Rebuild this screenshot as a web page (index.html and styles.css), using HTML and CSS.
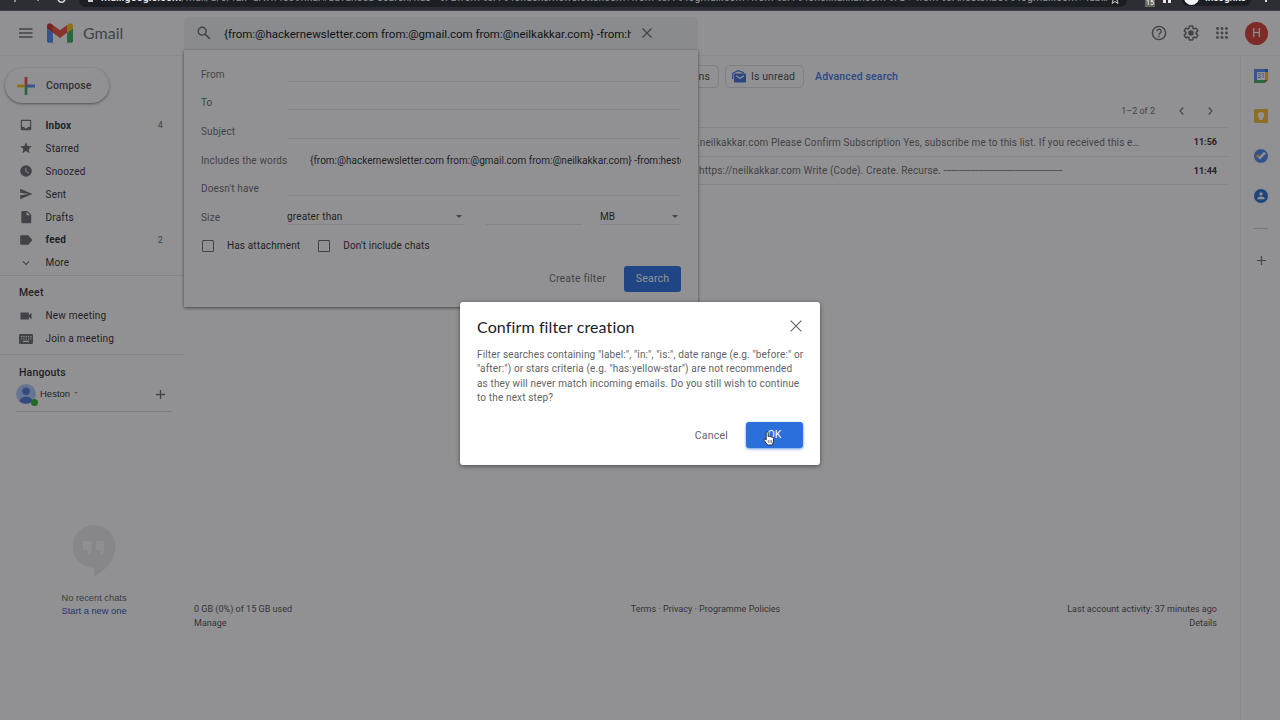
FILE: index.html
```html
<!DOCTYPE html>
<html lang="en">
<head>
    <meta charset="UTF-8">
    <title>Gmail</title>
    <link rel="stylesheet" href="styles.css">
</head>
<body>
    <div class="browser-bar">
        <div class="browser-nav">
            <svg width="70" height="11" viewBox="0 0 70 11"><path d="M15 0v2M38 0v1" stroke="#aaa" stroke-width="1.5"/><path d="M58 0q3.5 4.500 7 0" fill="none" stroke="#ddd" stroke-width="1.5"/></svg>
        </div>
        <div class="url-pill">
            <span class="lock"></span>
            <span class="url"><b>mail.google.com</b>/mail/u/0/?zx=arwfi4o39nkar#advanced-search/has=%7Bfrom%3A%40hackernewsletter.com+from%3A%40gmail.com+from%3A%40neilkakkar.com%7D+-from%3Ahestonbot%40gmail.com+-lab…</span>
            <svg class="url-star" width="10" height="11" viewBox="0 0 10 11"><path d="M5-5l1.200 3.500H10L7 0l1 3.500-3-2-3 2L3 0" fill="none" stroke="#c8c9cc"/></svg>
        </div>
        <div class="extension"><span class="extension-badge">15</span></div>
        <svg class="puzzle" width="10" height="11" viewBox="0 0 10 11"><path d="M1 0h3v3H1zM6 0h3v3H6z" fill="#e8eaed"/></svg>
        <div class="incognito"><span class="incognito-icon"></span><span class="incognito-label">Incognito</span></div>
        <span class="browser-more"></span>
    </div>

    <div class="gmail">
        <header class="header">
            <svg class="menu-icon" width="14" height="10" viewBox="0 0 14 10"><path d="M0 1h13.500M0 5h13.500M0 9h13.500" stroke="#5f6368" stroke-width="1.500"/></svg>
            <svg class="logo" width="26" height="20" viewBox="52 42 88 66">
                <path fill="#4285f4" d="M58 108h14V74L52 59v43c0 3.320 2.690 6 6 6"/>
                <path fill="#34a853" d="M120 108h14c3.320 0 6-2.690 6-6V59l-20 15"/>
                <path fill="#fbbc04" d="M120 48v26l20-15v-8c0-7.420-8.470-11.650-14.400-7.200"/>
                <path fill="#ea4335" d="M72 74V48l24 18 24-18v26L96 92"/>
                <path fill="#c5221f" d="M52 51v8l20 15V48l-5.600-4.200c-5.940-4.450-14.400-.22-14.400 7.200"/>
            </svg>
            <span class="brand">Gmail</span>
            <div class="search-bar">
                <svg width="14" height="14" viewBox="0 0 14 14"><circle cx="5.200" cy="5.200" r="3.900" fill="none" stroke="#5f6368" stroke-width="1.500"/><path d="M8 8l4.800 4.800" stroke="#5f6368" stroke-width="1.700"/></svg>
                <span class="search-text">{from:@hackernewsletter.com from:@gmail.com from:@neilkakkar.com} -from:hestonbot</span>
                <svg width="10" height="10" viewBox="0 0 10 10"><path d="M.5.5l9 9M9.500.5l-9 9" stroke="#5f6368" stroke-width="1.300"/></svg>
            </div>
            <div class="header-actions">
                <svg width="16" height="16" viewBox="0 0 16 16" fill="none" stroke="#5f6368" stroke-width="1.400"><circle cx="8" cy="8" r="6.600"/><path d="M5.900 6.300a2.100 2.100 0 1 1 3.200 1.800Q8 8.700 8 9.700"/><path d="M8 10.700v1.500"/></svg>
                <svg width="18" height="18" viewBox="0 0 24 24" fill="#5f6368"><path d="M13.850 22.250h-3.700c-.74 0-1.360-.54-1.450-1.270l-.27-1.890c-.27-.14-.53-.29-.79-.46l-1.800.72c-.7.260-1.470-.030-1.810-.65L2.200 15.530c-.35-.66-.2-1.440.36-1.880l1.530-1.190c-.01-.150-.020-.3-.020-.46s.010-.310.020-.46l-1.520-1.190c-.59-.45-.74-1.260-.37-1.880l1.850-3.190c.34-.62 1.110-.9 1.790-.63l1.810.73c.26-.17.520-.32.780-.46l.27-1.910c.090-.7.710-1.250 1.440-1.250h3.700c.74 0 1.360.54 1.450 1.270l.27 1.890c.27.140.53.290.79.460l1.800-.72c.71-.26 1.480.030 1.820.65l1.840 3.180c.36.660.2 1.440-.36 1.880l-1.520 1.190c.010.150.020.3.020.46s-.010.310-.020.460l1.520 1.190c.56.450.72 1.230.37 1.860l-1.860 3.220c-.34.620-1.110.9-1.800.63l-1.800-.72c-.26.170-.52.320-.78.460l-.27 1.910c-.1.680-.72 1.220-1.460 1.220zm-3.230-2h2.760l.37-2.550.53-.22c.44-.18.880-.44 1.340-.78l.45-.34 2.380.96 1.380-2.400-2.030-1.580.070-.56c.030-.26.060-.51.060-.78s-.030-.53-.060-.78l-.070-.56 2.030-1.580-1.390-2.400-2.390.96-.45-.35c-.42-.32-.87-.58-1.330-.77l-.52-.22-.37-2.550h-2.760l-.37 2.550-.53.210c-.44.190-.88.440-1.340.79l-.45.330-2.380-.95-1.390 2.390 2.030 1.580-.070.560a7 7 0 0 0-.060.790c0 .26.020.53.060.78l.070.560-2.030 1.580 1.380 2.400 2.390-.96.450.35c.43.330.86.580 1.330.77l.53.220.38 2.550z"/><circle cx="12" cy="12" r="3.700"/></svg>
                <svg width="12" height="12" viewBox="0 0 12 12" fill="#5f6368"><circle cx="1.500" cy="1.500" r="1.400"/><circle cx="6" cy="1.500" r="1.400"/><circle cx="10.500" cy="1.500" r="1.400"/><circle cx="1.500" cy="6" r="1.400"/><circle cx="6" cy="6" r="1.400"/><circle cx="10.500" cy="6" r="1.400"/><circle cx="1.500" cy="10.500" r="1.400"/><circle cx="6" cy="10.500" r="1.400"/><circle cx="10.500" cy="10.500" r="1.400"/></svg>
                <span class="avatar">H</span>
            </div>
        </header>

        <div class="body">
            <nav class="sidebar">
                <button class="compose">
                    <svg width="18" height="18" viewBox="0 0 18 18"><path fill="#ea4335" d="M7.600 0h2.800v9H7.600z"/><path fill="#fbbc04" d="M0 7.600h7.600v2.800H0z"/><path fill="#34a853" d="M7.600 9h2.800v9H7.600z"/><path fill="#4285f4" d="M10.400 7.600H18v2.800H9z"/></svg>
                    <span>Compose</span>
                </button>
                <ul class="nav-list">
                    <li class="unread"><svg viewBox="0 0 24 24"><path d="M19 3H5a2 2 0 0 0-2 2v14a2 2 0 0 0 2 2h14a2 2 0 0 0 2-2V5a2 2 0 0 0-2-2zm0 12h-4a3 3 0 0 1-6 0H5V5h14z"/></svg><span>Inbox</span><i>4</i></li>
                    <li><svg viewBox="0 0 24 24"><path d="M12 17.300l6.200 3.700-1.600-7L22 9.200l-7.200-.6L12 2 9.200 8.600 2 9.200 7.500 14l-1.700 7z"/></svg><span>Starred</span></li>
                    <li><svg viewBox="0 0 24 24"><path d="M12 2a10 10 0 1 0 0 20 10 10 0 0 0 0-20zm4.200 14.200L11 13V7h1.500v5.200l4.500 2.700z"/></svg><span>Snoozed</span></li>
                    <li><svg viewBox="0 0 24 24"><path d="M2 21l21-9L2 3v7l15 2-15 2z"/></svg><span>Sent</span></li>
                    <li><svg viewBox="0 0 24 24"><path d="M6 1.500a2 2 0 0 0-2 2v17c0 1.100.9 2 2 2h13a2 2 0 0 0 2-2V8l-6.500-6.500zM13 9V3l6 6z"/></svg><span>Drafts</span></li>
                    <li class="unread"><svg viewBox="0 0 24 24"><path d="M17 5c-.3-.6-1-1-1.600-1H4a2 2 0 0 0-2 2v12c0 1.100.9 2 2 2h11.400c.6 0 1.300-.4 1.600-.9l6-7.100z"/></svg><span>feed</span><i>2</i></li>
                    <li><svg viewBox="0 0 24 24"><path d="M7.400 8.500l4.600 4.600 4.600-4.600L18 9.900l-6 6-6-6z"/></svg><span>More</span></li>
                </ul>
                <div class="meet">
                    <h3>Meet</h3>
                    <ul class="nav-list">
                        <li><svg viewBox="0 0 24 24"><path d="M17 10.500V7a1 1 0 0 0-1-1H3.500a1 1 0 0 0-1 1v10a1 1 0 0 0 1 1H16a1 1 0 0 0 1-1v-3.500l4.500 4.200V6.300z"/></svg><span>New meeting</span></li>
                        <li><svg viewBox="0 0 24 24"><path fill-rule="evenodd" d="M2 3.500h20a2 2 0 0 1 2 2v13a2 2 0 0 1-2 2H2a2 2 0 0 1-2-2v-13a2 2 0 0 1 2-2zM3.500 7v2h2V7zm4 0v2h2V7zm4 0v2h2V7zm4 0v2h2V7zm4 0v2h2V7zm-16 4v2h2v-2zm4 0v2h2v-2zm4 0v2h2v-2zm4 0v2h2v-2zm4 0v2h2v-2zM7 15v2h10v-2z"/></svg><span>Join a meeting</span></li>
                    </ul>
                </div>
                <div class="hangouts">
                    <h3>Hangouts</h3>
                    <div class="user">
                        <span class="user-pic">
                            <svg width="20" height="20" viewBox="0 0 20 20"><circle cx="10" cy="10" r="10" fill="#a8c7fa"/><circle cx="10" cy="7.300" r="3.800" fill="#4272db"/><path d="M3.500 17.500c0-6.500 13-6.500 13 0Q10 22 3.500 17.500z" fill="#4272db"/></svg>
                            <span class="online"></span>
                        </span>
                        <span class="user-name">Heston</span>
                        <span class="caret small"></span>
                        <svg class="plus" width="9" height="9" viewBox="0 0 9 9"><path d="M4.500 0v9M0 4.500h9" stroke="#5f6368" stroke-width="1.300"/></svg>
                    </div>
                </div>
                <div class="no-chats">
                    <svg width="44" height="52" viewBox="0 0 44 52"><path d="M22 0a21.500 21.500 0 1 0 0 43v8.500C33 46 43.500 35 43.500 21.500A21.500 21.500 0 0 0 22 0z" fill="#ebebeb"/><path d="M11 16h8.500v9q0 4-4 4v-4H11zM24 16h8v9q0 4-4 4v-4h-4z" fill="#fafafa"/></svg>
                    <span>No recent chats</span>
                    <a>Start a new one</a>
                </div>
            </nav>

            <main class="content">
                <div class="chips">
                    <span class="chip chip-first">ns</span>
                    <span class="chip"><svg width="14" height="13" viewBox="0 0 14 13"><path d="M.7 9V3.300L6 .7l6 2.100" fill="none" stroke="#3367d6" stroke-width="1.200"/><path d="M3 3.500h10q1 0 1 1v7q0 1-1 1H3q-1 0-1-1v-7q0-1 1-1z" fill="#3367d6"/><path d="M4 5.700l4 2.500 4-2.500" fill="none" stroke="#fff" stroke-width="1.200"/></svg>Is unread</span>
                    <a class="advanced">Advanced search</a>
                </div>
                <div class="pager">
                    <span>1–2 of 2</span>
                    <svg width="5" height="8" viewBox="0 0 5 8"><path d="M4.300.5L1 4l3.300 3.500" fill="none" stroke="#5f6368" stroke-width="1.100"/></svg>
                    <svg width="5" height="8" viewBox="0 0 5 8"><path d="M.7.5L4 4 .7 7.500" fill="none" stroke="#5f6368" stroke-width="1.100"/></svg>
                </div>
                <div class="mail-row"><span class="snippet">.neilkakkar.com Please Confirm Subscription Yes, subscribe me to this list. If you received this e…</span><b>11:56</b></div>
                <div class="mail-row"><span class="snippet second">https://neilkakkar.com Write (Code). Create. Recurse. <span class="dashes">---------------------------------------------</span></span><b>11:44</b></div>
                <footer class="footer">
                    <div>0 GB (0%) of 15 GB used<br>Manage</div>
                    <div class="links">Terms · Privacy · Programme Policies</div>
                    <div class="activity">Last account activity: 37 minutes ago<br>Details</div>
                </footer>
            </main>

            <aside class="addons">
                <svg width="14" height="14" viewBox="0 0 14 14"><path fill="#4285f4" d="M1 0h10v3H3v8H0V1q0-1 1-1z"/><path fill="#1967d2" d="M11 0h2q1 0 1 1v2h-3z"/><path fill="#fbbc04" d="M11 3h3v8h-3z"/><path fill="#34a853" d="M3 11h8v3H1q-1 0-1-1v-2z"/><path fill="#ea4335" d="M11 11h3l-3 3z"/><path fill="#fff" d="M3 3h8v8H3z"/><text x="7" y="9.300" text-anchor="middle" class="cal-day">31</text></svg>
                <svg width="14" height="14" viewBox="0 0 14 14"><rect width="14" height="14" rx="1" fill="#f4b925"/><circle cx="7" cy="6.300" r="3.200" fill="#fff"/><path d="M5.400 8h3.200v3H5.400z" fill="#fff"/></svg>
                <svg width="14" height="14" viewBox="0 0 14 14"><circle cx="7" cy="7" r="7" fill="#4a7df0"/><path d="M5 9.700l6-6" fill="none" stroke="#fff" stroke-width="2.400"/><circle cx="3.700" cy="7" r="1.400" fill="#fbbc04"/></svg>
                <svg width="14" height="14" viewBox="0 0 14 14"><circle cx="7" cy="7" r="7" fill="#1967d2"/><circle cx="7" cy="4.900" r="1.700" fill="#fff"/><path d="M3.500 10.300V9.200q0-1.700 3.500-1.700t3.500 1.700v1.100z" fill="#fff"/></svg>
                <span class="addons-line"></span>
                <svg class="addons-plus" width="9" height="9" viewBox="0 0 9 9"><path d="M4.500 0v9M0 4.500h9" stroke="#5f6368" stroke-width="1.100"/></svg>
            </aside>
        </div>

        <!-- advanced search dropdown -->
        <form class="search-panel">
            <div class="field"><label>From</label><span class="line"></span></div>
            <div class="field"><label>To</label><span class="line"></span></div>
            <div class="field"><label>Subject</label><span class="line"></span></div>
            <div class="field"><label>Includes the words</label><span class="words">{from:@hackernewsletter.com from:@gmail.com from:@neilkakkar.com} -from:hestonbot</span></div>
            <div class="field"><label>Doesn't have</label><span class="line"></span></div>
            <div class="field">
                <label>Size</label>
                <span class="line select greater">greater than<span class="caret"></span></span>
                <span class="line amount"></span>
                <span class="line select unit">MB<span class="caret"></span></span>
            </div>
            <div class="field checks">
                <span class="box"></span><span class="check-label">Has attachment</span>
                <span class="box"></span><span class="check-label">Don't include chats</span>
            </div>
            <div class="panel-actions">
                <span class="create-filter">Create filter</span>
                <span class="search-btn">Search</span>
            </div>
        </form>

        <div class="scrim"></div>
        <div class="dialog">
            <div class="dialog-head">
                <h2>Confirm filter creation</h2>
                <svg width="12" height="12" viewBox="0 0 12 12"><path d="M.7.7l10.600 10.600M11.300.7L.7 11.300" stroke="#666" stroke-width="1.200"/></svg>
            </div>
            <p>Filter searches containing "label:", "in:", "is:", date range (e.g. "before:" or<br>"after:") or stars criteria (e.g. "has:yellow-star") are not recommended<br>as they will never match incoming emails. Do you still wish to continue<br>to the next step?</p>
            <div class="dialog-actions">
                <span class="cancel">Cancel</span>
                <span class="ok">OK</span>
            </div>
            <svg class="pointer" width="12" height="15" viewBox="0 0 12 15"><path d="M3.200 1.500q1-1.500 2 0v4q1-.8 1.700.2 1.100-.6 1.700.5 1.800-.5 1.900 1.300v3L9.300 14H4.600L1.200 9.500Q.4 7.700 2 7.800l1.200 1.100z" fill="#fff" stroke="#222" stroke-width=".9"/><path d="M5.300 9v3M7 9v3M8.600 9v3" stroke="#444" stroke-width=".6"/></svg>
        </div>
    </div>
</body>
</html>
```

FILE: styles.css
```css
* {
    box-sizing: border-box;
}
body {
    margin: 0;
    width: 1280px;
    height: 720px;
    overflow: hidden;
    font-family: Roboto, Arial, sans-serif;
    font-size: 10px;
    color: #202124;
}
svg {
    display: block;
    flex-shrink: 0;
}
h2, h3, p, ul {
    margin: 0;
    padding: 0;
}

/* browser chrome */
.browser-bar {
    height: 11px;
    display: flex;
    background: #2d2e33;
    border-bottom: 1px solid #414147;
    overflow: hidden;
}
.browser-nav {
    width: 79px;
}
.url-pill {
    width: 1048px;
    height: 7px;
    display: flex;
    padding-left: 9px;
    background: #1b1e22;
    border-radius: 0 0 9px 9px;
}
.lock {
    width: 5px;
    height: 2px;
    margin-right: 8px;
    background: #ccc;
}
.url {
    width: 999px;
    height: 14px;
    line-height: 14px;
    margin-top: -9px;
    white-space: nowrap;
    font-size: 10.500px;
    letter-spacing: 0.1px;
    color: #929599;
}
.url b {
    font-weight: 500;
    color: #e8eaed;
}
.url-star {
    margin-left: 10px;
}
.extension {
    width: 12px;
    height: 7px;
    margin-left: 17px;
}
.extension-badge {
    display: block;
    width: 10px;
    height: 7px;
    margin-left: 1px;
    background: #666;
    color: #fff;
    font-size: 7px;
    line-height: 7px;
    text-align: center;
}
.puzzle {
    margin-left: 6px;
}
.incognito {
    width: 69px;
    height: 6px;
    display: flex;
    margin-left: 10px;
    background: #1b1e22;
    border-radius: 0 0 8px 8px;
}
.incognito-icon {
    width: 15px;
    height: 15px;
    margin: -10px 6px 0 2px;
    border-radius: 50%;
    background: #f1f3f4;
    flex-shrink: 0;
}
.incognito-label {
    height: 14px;
    line-height: 14px;
    margin-top: -9px;
    font-size: 10px;
    font-weight: 500;
    letter-spacing: -0.1px;
    color: #e8eaed;
}
.browser-more {
    width: 2px;
    height: 2px;
    margin-left: 14px;
    background: #ddd;
}

/* page */
.gmail {
    position: relative;
    height: 709px;
    display: flex;
    flex-direction: column;
    background: #fff;
}
.header {
    height: 45px;
    display: flex;
    align-items: center;
    padding-left: 19px;
    border-bottom: 1px solid #f1f3f4;
}
.logo {
    margin-left: 14px;
}
.brand {
    width: 101px;
    margin-left: 10px;
    font-family: Lato, sans-serif;
    font-size: 16px;
    line-height: 18px;
    color: #5f6368;
}
.search-bar {
    width: 514px;
    height: 33px;
    display: flex;
    align-items: center;
    padding-left: 13px;
    background: #f1f3f4;
    border-radius: 5px 5px 0 0;
}
.search-text {
    width: 407px;
    margin: 1px 11px 0 13px;
    overflow: hidden;
    white-space: nowrap;
    font-size: 11.500px;
    color: #000;
}
.header-actions {
    margin-left: auto;
    padding-right: 12px;
    display: flex;
    align-items: center;
}
.header-actions svg:nth-child(1) { margin-right: 15px; }
.header-actions svg:nth-child(2) { margin-right: 16px; }
.header-actions svg:nth-child(3) { margin-right: 17px; }
.avatar {
    width: 23px;
    height: 23px;
    border-radius: 50%;
    background: #d93025;
    color: #fff;
    font-size: 12px;
    line-height: 23px;
    text-align: center;
}
.body {
    flex: 1;
    display: flex;
}

/* sidebar */
.sidebar {
    width: 184px;
    display: flex;
    flex-direction: column;
}
.compose {
    width: 104px;
    height: 35px;
    display: flex;
    align-items: center;
    gap: 11px;
    margin: 12px 0 11px 5px;
    padding: 0 0 0 12px;
    border: none;
    border-radius: 18px;
    background: #fff;
    box-shadow: 0 1px 2px rgba(60,64,67,0.5), 0 1px 3px 1px rgba(60,64,67,0.15);
    font-family: Roboto, sans-serif;
    font-size: 10.500px;
    font-weight: 500;
    letter-spacing: 0.1px;
    color: #3c4043;
}
.nav-list {
    list-style: none;
}
.nav-list li {
    height: 22.9px;
    display: flex;
    align-items: center;
    padding: 0 21px 0 19px;
    letter-spacing: 0.2px;
}
.nav-list svg {
    width: 14px;
    height: 14px;
    margin-right: 12.500px;
    fill: #5f6368;
}
.nav-list i {
    margin-left: auto;
    font-style: normal;
    font-weight: 400;
    font-size: 9px;
    color: #5f6368;
}
.unread {
    font-weight: 700;
}
.meet, .hangouts {
    border-top: 1px solid #e3e5e8;
}
.meet {
    height: 79px;
    margin-top: 1px;
}
.sidebar h3 {
    height: 28px;
    line-height: 34px;
    padding-left: 19px;
    font-size: 10.500px;
    font-weight: 500;
    letter-spacing: 0.15px;
}
.sidebar .hangouts h3 {
    height: 29px;
    line-height: 35px;
}
.user {
    height: 28px;
    width: 156px;
    display: flex;
    align-items: flex-start;
    margin-left: 16px;
    border-bottom: 1px solid #d5d7da;
}
.user-pic {
    position: relative;
}
.online {
    position: absolute;
    left: 15px;
    top: 15px;
    width: 7px;
    height: 7px;
    border-radius: 50%;
    background: #1fb31f;
}
.user-name {
    margin: 4px 4px 0 4px;
    font-family: "Liberation Sans", Arial, sans-serif;
    font-size: 9.500px;
}
.caret {
    margin-right: 2px;
    border: 3px solid transparent;
    border-top: 3px solid #5f6368;
    border-bottom: none;
}
.caret.small {
    margin-top: 8px;
    border-width: 2.500px 2.500px 0;
    border-top-color: #909090;
}
.plus {
    margin: 6px 7px 0 auto;
}
.no-chats {
    display: flex;
    flex-direction: column;
    align-items: center;
    margin: 113px 0 0 4px;
    font: 9.300px/13px "Liberation Sans", Arial, sans-serif;
    color: #555;
}
.no-chats svg {
    margin-bottom: 15px;
}
.no-chats a {
    color: #1a47c8;
}

/* mail list */
.content {
    width: 1057px;
    display: flex;
    flex-direction: column;
    border-right: 1px solid #f1f3f4;
}
.chips {
    display: flex;
    align-items: center;
    height: 22px;
    margin-top: 9px;
    padding-left: 455px;
    font-size: 10.500px;
}
.chip {
    height: 23px;
    display: flex;
    align-items: center;
    margin-right: 6px;
    padding: 0 8px 0 6px;
    border: 1px solid #dadce0;
    border-radius: 5px;
    letter-spacing: 0.1px;
    color: #3c4043;
}
.chip svg {
    margin-right: 5px;
}
.chip-first {
    width: 80px;
    justify-content: flex-end;
}
.advanced {
    margin-left: 5px;
    letter-spacing: 0.15px;
    font-weight: 500;
    color: #2f6de0;
}
.pager {
    height: 40px;
    display: flex;
    align-items: center;
    justify-content: flex-end;
    padding: 7px 27px 0 0;
    font-size: 9px;
    color: #5f6368;
}
.pager svg {
    margin-left: 24px;
}
.mail-row {
    height: 28.5px;
    width: 1044px;
    display: flex;
    align-items: center;
    justify-content: space-between;
    padding: 1px 11px 0 513px;
    border-top: 1px solid #e6e8ea;
    letter-spacing: 0.12px;
    color: #5f6368;
}
.mail-row + .footer {
    border-top: 1px solid #e6e8ea;
}
.mail-row b {
    font-size: 9px;
    letter-spacing: 0;
    color: #202124;
}
.snippet {
    white-space: nowrap;
}
.snippet.second {
    padding-left: 2px;
}
.dashes {
    letter-spacing: -0.120px;
}
.footer {
    width: 1044px;
    flex: 1;
    display: grid;
    grid-template-columns: 1fr 1fr 1fr;
    align-content: start;
    padding: 417px 11px 0 10px;
    font-size: 9px;
    line-height: 14.300px;
    letter-spacing: 0.020px;
    color: #444;
}
.links {
    text-align: center;
}
.activity {
    text-align: right;
}
.addons {
    width: 39px;
    display: flex;
    flex-direction: column;
    align-items: center;
    gap: 26px;
    padding: 13px 0 0 1px;
}
.cal-day {
    font: 6.500px Roboto, sans-serif;
    fill: #1967d2;
}
.addons-line {
    width: 14px;
    height: 1px;
    margin-top: -1px;
    background: #ccc;
}
.addons-plus {
    margin-top: 1px;
}

/* search dropdown */
.search-panel {
    position: absolute;
    left: 184px;
    top: 39px;
    width: 514px;
    height: 257px;
    padding: 10px 17px 0;
    background: #fff;
    box-shadow: 0 1px 3px rgba(0,0,0,0.6);
}
.field {
    height: 28.6px;
    display: flex;
    align-items: center;
    letter-spacing: 0.14px;
}
.field label {
    width: 86px;
    white-space: nowrap;
    color: #5f6368;
}
.line {
    flex: 1;
    height: 15px;
    border-bottom: 1px solid #e4e6e8;
}
.words {
    width: 372px;
    margin-left: 23px;
    overflow: hidden;
    white-space: nowrap;
    letter-spacing: 0;
}
.select {
    display: flex;
    align-items: center;
    justify-content: space-between;
}
.greater {
    flex: none;
    width: 177px;
}
.amount {
    flex: none;
    width: 96px;
    margin: 0 18px 0 22px;
}
.unit .caret {
    margin-right: 3px;
}
.checks {
    padding-left: 1px;
}
.box {
    width: 12px;
    height: 12px;
    border: 1.500px solid #5f6368;
    border-radius: 1px;
}
.check-label {
    margin: 0 18px 0 13px;
}
.panel-actions {
    height: 37px;
    display: flex;
    justify-content: flex-end;
    align-items: center;
    gap: 18px;
    font-size: 10.500px;
    letter-spacing: 0.2px;
    color: #5f6368;
}
.search-btn {
    width: 57px;
    height: 26px;
    line-height: 26px;
    border-radius: 3px;
    background: #1a66e0;
    color: #fff;
    text-align: center;
}

/* confirm dialog */
.scrim {
    position: absolute;
    inset: 0;
    background: rgba(35,35,39,0.5);
}
.dialog {
    position: absolute;
    left: 460px;
    top: 291px;
    width: 360px;
    height: 163px;
    padding: 16px 17px;
    background: #fff;
    border-radius: 3px;
    box-shadow: 0 1px 4px rgba(0,0,0,0.5);
}
.dialog-head {
    height: 19px;
    display: flex;
    justify-content: space-between;
    align-items: center;
}
.dialog-head svg {
    margin: -3px 1px 0 0;
}
.dialog h2 {
    margin-top: -2px;
    font-family: Lato, sans-serif;
    font-weight: 400;
    font-size: 16px;
    letter-spacing: 0.120px;
}
.dialog p {
    margin-top: 11px;
    line-height: 14.300px;
    letter-spacing: 0.15px;
    white-space: nowrap;
    color: #5f6368;
}
.dialog-actions {
    display: flex;
    justify-content: flex-end;
    align-items: center;
    gap: 18px;
    margin-top: 17px;
    font-size: 10.500px;
    color: #5f6368;
    letter-spacing: 0.2px;
}
.ok {
    width: 57px;
    height: 26px;
    line-height: 25px;
    border-radius: 3px;
    background: #2a6fdb;
    box-shadow: 0 1px 3px rgba(42,111,219,0.7);
    color: #fff;
    text-align: center;
}
.pointer {
    position: absolute;
    left: 303px;
    top: 129px;
}
```
